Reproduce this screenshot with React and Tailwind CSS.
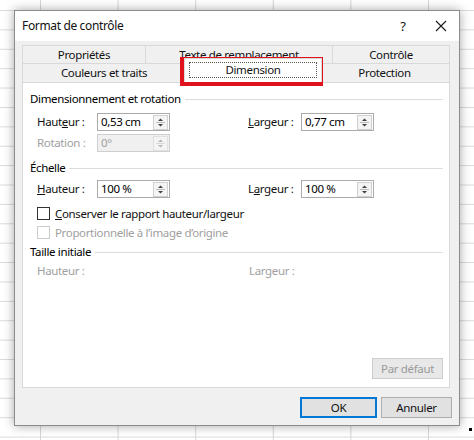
import React from "react";

function Spin({ disabled }) {
  const c = disabled ? "#b5b5b5" : "#404040";
  return (
    <div className={`flex h-[15px] w-[15px] flex-col items-center justify-center border ${disabled ? "border-[#e0e0e0] bg-[#f4f4f4]" : "border-[#d0d0d0] bg-[#f4f4f4]"}`}>
      <svg width="13" height="13" viewBox="0 0 13 13">
        <path d="M4 5 L6.5 2.5 L9 5 Z" fill={c} />
        <line x1="2" y1="6.5" x2="11" y2="6.5" stroke={disabled ? "#d8d8d8" : "#bdbdbd"} strokeWidth="1" />
        <path d="M4 8 L6.5 10.5 L9 8 Z" fill={c} />
      </svg>
    </div>
  );
}

function Field({ value, disabled }) {
  return (
    <div className={`flex h-[18px] w-[73px] items-center justify-between border pl-[3px] pr-[1px] ${disabled ? "border-[#cfcfcf] bg-[#f0f0f0] text-[#a0a0a0]" : "border-[#ababab] bg-white text-black"}`}>
      <span>{value}</span>
      <Spin disabled={disabled} />
    </div>
  );
}

function Section({ title }) {
  return (
    <div className="flex h-[18px] items-center pl-[7px] pr-[6px]">
      <span className="text-black">{title}</span>
      <div className="ml-[4px] h-px flex-1 bg-[#dcdcdc]" />
    </div>
  );
}

export default function App() {
  return (
    <div
      className="relative h-[440px] w-[474px] overflow-hidden bg-white pl-[14px] pt-[10px] font-['Noto_Sans',sans-serif] text-[11.5px] leading-none tracking-[-0.35px] text-[#111] bg-[linear-gradient(to_right,#d6d6d6_1px,transparent_1px),linear-gradient(to_bottom,#dadada_1px,transparent_1px)] bg-[size:77.6px_19.4px] bg-[position:40px_10px]"
    >
      <div className="relative flex h-[416px] w-[446px] flex-col border border-[#8c8c8c] bg-[#f0f0f0] shadow-[0_0_10px_rgba(0,0,0,0.35)]">
        {/* title bar */}
        <div className="flex h-[30px] items-center bg-white pl-[7px] text-[12px]">
          <span className="flex-1">Format de contrôle</span>
          <span className="w-[20px] text-center text-[13px]">?</span>
          <svg className="ml-[22px] mr-[12px]" width="12" height="12" viewBox="0 0 12 12">
            <path d="M1 1 L11 11 M11 1 L1 11" stroke="#1a1a1a" strokeWidth="1.1" />
          </svg>
        </div>

        {/* tabs */}
        <div className="ml-[7px] mt-[4px] flex w-[428px] flex-col">
          <div className="flex h-[18px]">
            <div className="flex w-[124px] items-center justify-center border border-b-0 border-[#d9d9d9] bg-[#f0f0f0]">Propriétés</div>
            <div className="flex w-[187px] items-center justify-center border border-b-0 border-l-0 border-[#d9d9d9] bg-[#f0f0f0]">Texte de remplacement</div>
            <div className="flex w-[117px] items-center justify-center border border-b-0 border-l-0 border-[#d9d9d9] bg-[#f0f0f0]">Contrôle</div>
          </div>
          <div className="flex h-[19px] items-end">
            <div className="flex h-[19px] w-[164px] items-center justify-center border border-b-0 border-[#d9d9d9] bg-[#f0f0f0]">Couleurs et traits</div>
            <div className="relative z-10 -mx-[2px] -mt-[5px] flex h-[24px] w-[138px] items-center justify-center border border-b-0 border-[#d9d9d9] bg-white px-[4px] pb-[1px]">
              <div className="flex h-[16px] w-full items-center justify-center border border-dotted border-[#555]">Dimension</div>
            </div>
            <div className="flex h-[19px] w-[130px] items-center justify-center border border-b-0 border-l-0 border-[#d9d9d9] bg-[#f0f0f0]">Protection</div>
          </div>
        </div>

        {/* panel */}
        <div className="ml-[7px] flex h-[306px] w-[428px] flex-col border border-[#d9d9d9] bg-white pt-[7px]">
          <Section title="Dimensionnement et rotation" />
          <div className="mt-[5px] flex h-[18px] items-center">
            <span className="w-[74px] pl-[14px]">Haut<u>e</u>ur :</span>
            <Field value="0,53 cm" />
            <span className="ml-[78px] w-[53px]"><u>L</u>argeur :</span>
            <Field value="0,77 cm" />
          </div>
          <div className="mt-[3px] flex h-[18px] items-center">
            <span className="w-[74px] pl-[14px] text-[#a0a0a0]">Rotation :</span>
            <Field value="0°" disabled />
          </div>
          <div className="mt-[7px]">
            <Section title="Échelle" />
          </div>
          <div className="mt-[3px] flex h-[18px] items-center">
            <span className="w-[74px] pl-[14px]"><u>H</u>auteur :</span>
            <Field value="100 %" />
            <span className="ml-[78px] w-[53px]">L<u>a</u>rgeur :</span>
            <Field value="100 %" />
          </div>
          <div className="mt-[6px] flex h-[19px] items-center pl-[14px]">
            <div className="h-[13px] w-[13px] border border-[#333] bg-white" />
            <span className="ml-[5px]"><u>C</u>onserver le rapport hauteur/largeur</span>
          </div>
          <div className="flex h-[19px] items-center pl-[14px] text-[#a0a0a0]">
            <div className="h-[13px] w-[13px] border border-[#cccccc] bg-white" />
            <span className="ml-[5px]">Proportionnelle à l’image d’origine</span>
          </div>
          <div className="mt-[1px]">
            <Section title="Taille initiale" />
          </div>
          <div className="mt-[1px] flex h-[18px] items-center text-[#a0a0a0]">
            <span className="w-[226px] pl-[14px]">Hauteur :</span>
            <span>Largeur :</span>
          </div>
          <div className="flex flex-1 items-end justify-end pb-[8px] pr-[6px]">
            <div className="flex h-[21px] w-[71px] items-center justify-center border border-[#cccccc] bg-[#e8e8e8] text-[#9a9a9a]">Par défaut</div>
          </div>
        </div>

        {/* buttons */}
        <div className="mr-[7px] mt-[9px] flex justify-end gap-[4px]">
          <div className="flex h-[21px] w-[77px] items-center justify-center border border-[#0078d7] bg-[#e1e1e1] shadow-[inset_0_0_0_1px_#0078d7]">OK</div>
          <div className="flex h-[21px] w-[71px] items-center justify-center border border-[#adadad] bg-[#e1e1e1]">Annuler</div>
        </div>
      </div>

      {/* red highlight annotation */}
      <div className="absolute left-[180px] top-[57px] h-[29px] w-[143px] border-[4px] border-solid border-[#e0121b]" />
      <div className="absolute left-[469px] top-[428px] h-[3px] w-[3px] bg-black" />
    </div>
  );
}
